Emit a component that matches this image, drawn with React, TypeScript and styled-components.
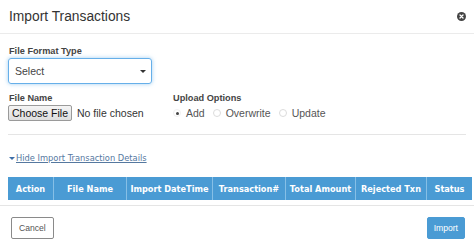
import * as React from "react";
import styled, { createGlobalStyle } from "styled-components";

const GlobalStyle = createGlobalStyle`
  html, body {
    margin: 0;
    padding: 0;
    background: #fff;
  }
  body {
    font-family: "Liberation Sans", Arial, sans-serif;
    color: #333;
  }
`;

const Modal = styled.div`
  width: 474px;
  height: 244px;
  display: flex;
  flex-direction: column;
  overflow: hidden;
  background: #fff;
`;

const Header = styled.div`
  display: flex;
  align-items: center;
  justify-content: space-between;
  height: 33px;
  padding: 0 8px 0 9px;
  border-bottom: 1px solid #ebebeb;
`;

const Title = styled.h1`
  margin: 0;
  font-size: 13.8px;
  font-weight: normal;
  color: #333;
`;

const Body = styled.div`
  display: flex;
  flex-direction: column;
  padding: 0 8px;
`;

const Label = styled.div`
  font-family: "Liberation Sans", Arial, sans-serif;
  font-size: 9.2px;
  line-height: 10px;
  font-weight: bold;
  color: #444;
  margin-bottom: 2px;
`;

const FormatGroup = styled.div`
  margin-top: 12px;
  margin-left: 1px;
`;

const SelectBox = styled.div`
  margin-left: -1px;
  width: 144px;
  height: 26px;
  box-sizing: border-box;
  border: 1px solid #66afe9;
  border-radius: 3px;
  box-shadow: 0 0 4px rgba(102, 175, 233, 0.6);
  display: flex;
  align-items: center;
  justify-content: space-between;
  padding: 0 5px 0 6px;
  font-size: 10.5px;
  color: #444;
`;

const Caret = styled.span`
  width: 0;
  height: 0;
  border-left: 3px solid transparent;
  border-right: 3px solid transparent;
  border-top: 3px solid #333;
`;

const Row = styled.div`
  display: flex;
  margin-top: 9px;
  padding-bottom: 13px;
  border-bottom: 1px solid #e5e5e5;
`;

const Field = styled.div<{ $width?: number }>`
  width: ${(p) => (p.$width ? `${p.$width}px` : "auto")};
  margin-left: 1px;
`;

const FileLine = styled.div`
  display: flex;
  align-items: center;
  gap: 5px;
  height: 16px;
  font-size: 10.5px;
  color: #333;
  margin-left: -1px;
`;

const ChooseButton = styled.span`
  display: inline-block;
  height: 16px;
  line-height: 14px;
  box-sizing: border-box;
  padding: 0 3px;
  border: 1px solid #9a9a9a;
  border-radius: 2px;
  background: linear-gradient(#f4f4f4, #dedede);
  color: #111;
  font-size: 10.5px;
`;

const Radios = styled.div`
  display: flex;
  align-items: center;
  height: 16px;
  gap: 8px;
  font-size: 10.5px;
  color: #555;
`;

const RadioItem = styled.label`
  display: flex;
  align-items: center;
  gap: 5px;
`;

const RadioDot = styled.span<{ $checked?: boolean }>`
  width: 6px;
  height: 6px;
  border-radius: 50%;
  border: 1px solid ${(p) => (p.$checked ? "#f0f0f0" : "#dcdcdc")};
  background: #fff;
  position: relative;
  &::after {
    content: "";
    display: ${(p) => (p.$checked ? "block" : "none")};
    position: absolute;
    left: 1.5px;
    top: 1.5px;
    width: 3px;
    height: 3px;
    border-radius: 50%;
    background: #444;
  }
`;

const Toggle = styled.a`
  display: flex;
  align-items: center;
  gap: 1px;
  margin-top: 18px;
  margin-left: 1px;
  line-height: 10px;
  font-family: "DejaVu Sans", Verdana, sans-serif;
  font-size: 8.3px;
  color: #55789f;
  text-decoration: underline;
`;

const ToggleCaret = styled.span`
  width: 0;
  height: 0;
  border-left: 3px solid transparent;
  border-right: 3px solid transparent;
  border-top: 3px solid #3d6ea8;
`;

const Table = styled.table`
  margin-top: 14px;
  width: 458px;
  table-layout: fixed;
  border-collapse: collapse;
  background: #4a9bd4;
  th {
    height: 23px;
    padding: 0;
    font-family: "DejaVu Sans", Verdana, sans-serif;
    font-size: 8.2px;
    font-weight: bold;
    color: #fff;
    text-align: center;
    border-left: 1px solid #86bfe6;
    white-space: nowrap;
    overflow: hidden;
  }
  th:first-child {
    border-left: none;
  }
`;

const Footer = styled.div`
  margin-top: 5px;
  border-top: 1px solid #e5e5e5;
  display: flex;
  justify-content: space-between;
  align-items: center;
  padding: 11px 9px 0 11px;
`;

const Button = styled.button<{ $primary?: boolean }>`
  height: 22px;
  padding: 0 ${(p) => (p.$primary ? 6 : 7)}px;
  font-family: "Liberation Sans", Arial, sans-serif;
  font-size: 8.6px;
  border-radius: 2px;
  border: 1px solid ${(p) => (p.$primary ? "#4a9bd4" : "#8a8a8a")};
  background: ${(p) => (p.$primary ? "#4a9bd4" : "#fff")};
  color: ${(p) => (p.$primary ? "#fff" : "#555")};
`;

const CloseIcon = () => (
  <svg width="9" height="9" viewBox="0 0 12 12">
    <circle cx="6" cy="6" r="6" fill="#444" />
    <path d="M4 4 L8 8 M8 4 L4 8" stroke="#fff" strokeWidth="1.8" strokeLinecap="round" />
  </svg>
);

const columns: { name: string; width: number }[] = [
  { name: "Action", width: 45 },
  { name: "File Name", width: 72 },
  { name: "Import DateTime", width: 85 },
  { name: "Transaction#", width: 72 },
  { name: "Total Amount", width: 69 },
  { name: "Rejected Txn", width: 70 },
  { name: "Status", width: 45 },
];

const App = () => {
  return (
    <>
      <GlobalStyle />
      <Modal>
        <Header>
          <Title>Import Transactions</Title>
          <CloseIcon />
        </Header>
        <Body>
          <FormatGroup>
            <Label>File Format Type</Label>
            <SelectBox>
              Select
              <Caret />
            </SelectBox>
          </FormatGroup>
          <Row>
            <Field $width={163}>
              <Label>File Name</Label>
              <FileLine>
                <ChooseButton>Choose File</ChooseButton>
                No file chosen
              </FileLine>
            </Field>
            <Field>
              <Label>Upload Options</Label>
              <Radios>
                <RadioItem>
                  <RadioDot $checked />
                  Add
                </RadioItem>
                <RadioItem>
                  <RadioDot />
                  Overwrite
                </RadioItem>
                <RadioItem>
                  <RadioDot />
                  Update
                </RadioItem>
              </Radios>
            </Field>
          </Row>
          <Toggle>
            <ToggleCaret />
            Hide Import Transaction Details
          </Toggle>
          <Table>
            <thead>
              <tr>
                {columns.map((c) => (
                  <th key={c.name} style={{ width: c.width }}>
                    {c.name}
                  </th>
                ))}
              </tr>
            </thead>
          </Table>
        </Body>
        <Footer>
          <Button>Cancel</Button>
          <Button $primary>Import</Button>
        </Footer>
      </Modal>
    </>
  );
};

export default App;
